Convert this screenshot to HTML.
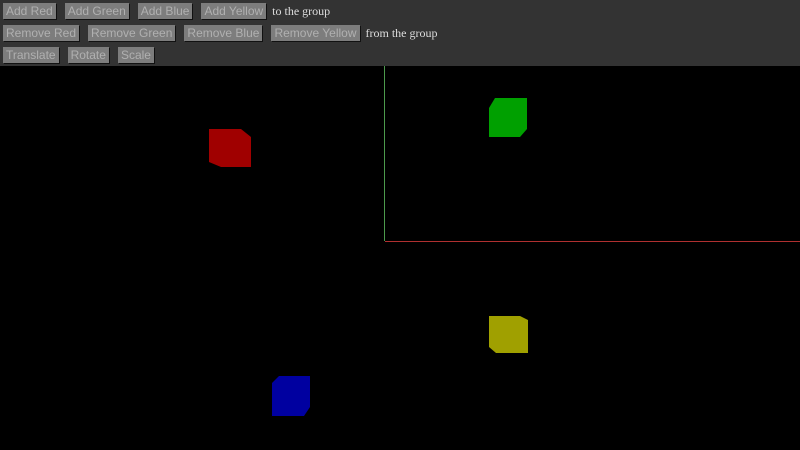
<!DOCTYPE html>
<html><head><style>
body{margin:0;width:800px;height:450px;background:#000;overflow:hidden;font-family:"Liberation Sans",sans-serif}
#bar{position:absolute;left:0;top:0;width:800px;height:66px;background:#333}
.row{position:absolute;left:3px;height:16px;display:flex;align-items:center}
.b{background:#7d7d7d;color:#b0b0b0;font-size:12px;height:16px;line-height:16px;padding:0 3px;margin-right:9px;box-shadow:1px 1px 0 #111;box-sizing:border-box;white-space:nowrap}
.t{color:#ddd;font-family:"Liberation Serif",serif;font-size:12px;margin-left:-3px}
</style></head><body>
<div id="bar">
<div class="row" style="top:3px"><span class="b">Add Red</span><span class="b">Add Green</span><span class="b">Add Blue</span><span class="b">Add Yellow</span><span class="t">to the group</span></div>
<div class="row" style="top:25px"><span class="b">Remove Red</span><span class="b">Remove Green</span><span class="b">Remove Blue</span><span class="b">Remove Yellow</span><span class="t">from the group</span></div>
<div class="row" style="top:47px"><span class="b">Translate</span><span class="b">Rotate</span><span class="b">Scale</span></div>
</div>
<div style="position:absolute;left:384px;top:66px;width:1px;height:175px;background:#4c9a4c"></div>
<div style="position:absolute;left:385px;top:241px;width:415px;height:1px;background:#b03030"></div>
<svg width="800" height="450" style="position:absolute;left:0;top:0">
<polygon points="209,129 241,129 251,137 251,167 221,167 209,162" fill="#a00000"/>
<polygon points="489,108 495,98 527,98 527,129 520,137 489,137" fill="#00a000"/>
<polygon points="489,316 520,316 528,320 528,353 496,353 489,347" fill="#a0a000"/>
<polygon points="272,383 279,376 310,376 310,407 304,416 272,416" fill="#0000a0"/>
</svg>
</body></html>
